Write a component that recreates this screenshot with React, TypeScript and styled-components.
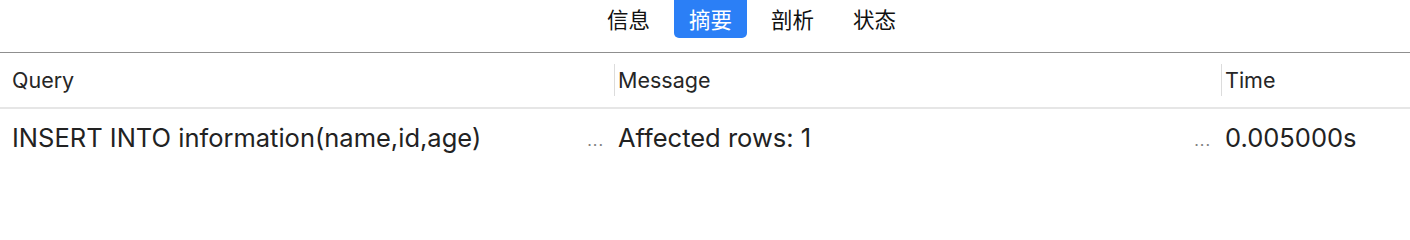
import React from "react";
import styled, { createGlobalStyle } from "styled-components";

const GlobalStyle = createGlobalStyle`
    html, body {
        margin: 0;
        padding: 0;
        background: #ffffff;
    }
    body {
        font-family: Inter, "Liberation Sans", "Noto Sans CJK SC", sans-serif;
        color: #222222;
    }
`;

type Row = {
    query: string;
    message: string;
    time: string;
};

const tabs = ["信息", "摘要", "剖析", "状态"];
const columns = ["Query", "Message", "Time"];
const rows: Row[] = [
    {
        query: "INSERT INTO information(name,id,age)",
        message: "Affected rows: 1",
        time: "0.005000s",
    },
];

const App = () => {
    const activeTab = 1;
    return (
        <>
            <GlobalStyle />
            <Page>
                <TabBar>
                    {tabs.map((tab, index) => (
                        <Tab key={tab} isActive={index === activeTab}>
                            {tab}
                        </Tab>
                    ))}
                </TabBar>
                <Table>
                    <HeaderRow>
                        {columns.map((col, index) => (
                            <HeaderCell key={col}>
                                {index > 0 && <Divider />}
                                <HeaderText isFirst={index === 0}>{col}</HeaderText>
                            </HeaderCell>
                        ))}
                    </HeaderRow>
                    {rows.map((row, index) => (
                        <DataRow key={index}>
                            <DataCell isFirst>
                                <CellText>{row.query}</CellText>
                                <More>...</More>
                            </DataCell>
                            <DataCell>
                                <CellText>{row.message}</CellText>
                                <More>...</More>
                            </DataCell>
                            <DataCell>
                                <CellText>{row.time}</CellText>
                            </DataCell>
                        </DataRow>
                    ))}
                </Table>
            </Page>
        </>
    );
};

export default App;

const Page = styled.div`
    width: 1410px;
    height: 210px;
    overflow: hidden;
    display: flex;
    flex-direction: column;
`;
const TabBar = styled.div`
    height: 53px;
    display: flex;
    align-items: flex-start;
    justify-content: center;
    gap: 9px;
    padding-left: 93px;
    border-bottom: 1px solid #8f8f8f;
    box-sizing: border-box;
`;
const Tab = styled.div<{ isActive: boolean }>`
    height: 38px;
    padding: 0 15px 2px;
    display: flex;
    align-items: center;
    box-sizing: border-box;
    font-family: "Noto Sans CJK SC", sans-serif;
    font-size: 21.5px;
    color: ${(props) => (props.isActive ? "#ffffff" : "#111111")};
    background-color: ${(props) => (props.isActive ? "#2b7ff6" : "transparent")};
    border-radius: 0 0 5px 5px;
`;
const Table = styled.div`
    display: flex;
    flex-direction: column;
`;
const HeaderRow = styled.div`
    display: grid;
    grid-template-columns: 614px 607px 1fr;
    height: 56px;
    border-bottom: 2px solid #e6e6e6;
    box-sizing: border-box;
`;
const HeaderCell = styled.div`
    display: flex;
    align-items: center;
`;
const Divider = styled.div`
    width: 1px;
    height: 32px;
    background-color: #dcdcdc;
`;
const HeaderText = styled.span<{ isFirst?: boolean }>`
    padding-left: ${(props) => (props.isFirst ? "12px" : "3px")};
    font-size: 21.5px;
    color: #262626;
`;
const DataRow = styled.div`
    display: grid;
    grid-template-columns: 614px 607px 1fr;
    height: 56px;
`;
const DataCell = styled.div<{ isFirst?: boolean }>`
    display: flex;
    align-items: center;
    justify-content: space-between;
    padding-left: ${(props) => (props.isFirst ? "12px" : "4px")};
    padding-right: 10px;
`;
const CellText = styled.span`
    font-size: 25.5px;
    color: #222222;
    white-space: nowrap;
`;
const More = styled.span`
    font-size: 16px;
    color: #808080;
    padding-top: 6px;
    letter-spacing: 1px;
`;
